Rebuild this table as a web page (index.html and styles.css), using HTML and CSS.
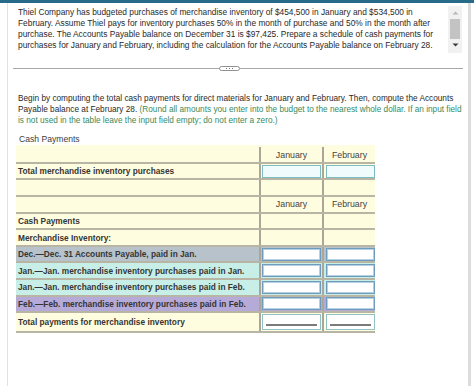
FILE: index.html
```html
<!DOCTYPE html>
<html>
<head>
<meta charset="utf-8">
<link rel="stylesheet" href="styles.css">
</head>
<body>
<div class="topbar"></div>
<div class="main">
  <div class="question">
    <p class="qtext">Thiel Company has budgeted purchases of merchandise inventory of $454,500 in January and $534,500 in<br>February. Assume Thiel pays for inventory purchases 50% in the month of purchase and 50% in the month after<br>purchase. The Accounts Payable balance on December 31 is $97,425. Prepare a schedule of cash payments for<br>purchases for January and February, including the calculation for the Accounts Payable balance on February 28.</p>
    <div class="scrollbar">
      <svg class="arrow" width="7" height="4" viewBox="0 0 7 4"><path d="M0.5 3.5 L3.5 0.5 L6.5 3.5 Z" fill="#b8b8b8"/></svg>
      <div class="thumb"></div>
      <svg class="arrow" width="7" height="4" viewBox="0 0 7 4"><path d="M0.5 0.5 L3.5 3.5 L6.5 0.5 Z" fill="#3a3a3a"/></svg>
    </div>
  </div>
  <div class="divider">
    <span class="rule"></span>
    <span class="pill"><i></i><i></i><i></i></span>
    <span class="rule"></span>
  </div>
  <p class="instr">Begin by computing the total cash payments for direct materials for January and February. Then, compute the Accounts<br>Payable balance at February 28. <span class="hint">(Round all amounts you enter into the budget to the nearest whole dollar. If an input field<br>is not used in the table leave the input field empty; do not enter a zero.)</span></p>
  <div class="caption">Cash Payments</div>
  <div class="sheet">
    <div class="row head first"><div class="c lbl"></div><div class="c num">January</div><div class="c num">February</div></div>
    <div class="row"><div class="c lbl">Total merchandise inventory purchases</div><div class="c num"><input class="fld given jan"></div><div class="c num"><input class="fld given feb"></div></div>
    <div class="row"><div class="c lbl"></div><div class="c num"></div><div class="c num"></div></div>
    <div class="row head"><div class="c lbl"></div><div class="c num">January</div><div class="c num">February</div></div>
    <div class="row"><div class="c lbl">Cash Payments</div><div class="c num"></div><div class="c num"></div></div>
    <div class="row"><div class="c lbl">Merchandise Inventory:</div><div class="c num"></div><div class="c num"></div></div>
    <div class="row dec"><div class="c lbl">Dec.—Dec. 31 Accounts Payable, paid in Jan.</div><div class="c num"><input class="fld jan"></div><div class="c num"><input class="fld feb"></div></div>
    <div class="row jn"><div class="c lbl">Jan.—Jan. merchandise inventory purchases paid in Jan.</div><div class="c num"><input class="fld jan"></div><div class="c num"><input class="fld feb"></div></div>
    <div class="row jn"><div class="c lbl">Jan.—Jan. merchandise inventory purchases paid in Feb.</div><div class="c num"><input class="fld jan"></div><div class="c num"><input class="fld feb"></div></div>
    <div class="row fb"><div class="c lbl">Feb.—Feb. merchandise inventory purchases paid in Feb.</div><div class="c num"><input class="fld jan"></div><div class="c num"><input class="fld feb"></div></div>
    <div class="row total"><div class="c lbl">Total payments for merchandise inventory</div><div class="c num"><input class="fld tot jan"></div><div class="c num"><input class="fld tot feb"></div></div>
  </div>
</div>
</body>
</html>
```
FILE: styles.css
```css
html, body {
  margin: 0;
  padding: 0;
  background: #fff;
}
body {
  width: 474px;
  height: 386px;
  overflow: hidden;
  font-family: "Liberation Sans", Arial, sans-serif;
  color: #2a2a2a;
}
.topbar {
  height: 3px;
  background: #276b88;
}
.main {
  box-sizing: border-box;
  margin-left: 7px;
  width: 464px;
  height: 383px;
  border-left: 1px solid #e2e2e2;
  border-right: 3px solid #dcdcdc;
}
.question {
  display: flex;
  align-items: flex-start;
  padding-top: 3px;
}
.qtext {
  margin: 0;
  padding: 0.5px 0 0 10px;
  font-size: 8.35px;
  line-height: 11.3px;
  white-space: nowrap;
}
.scrollbar {
  margin-left: auto;
  margin-right: 6px;
  width: 14px;
  height: 47px;
  background: #f1f1f1;
  display: flex;
  flex-direction: column;
  align-items: center;
  padding-top: 5px;
  box-sizing: border-box;
}
.scrollbar .arrow { display: block; }
.thumb {
  width: 10px;
  height: 20px;
  background: #c3c3c3;
  margin: 4px 0 4px;
}
.divider {
  display: flex;
  align-items: center;
  margin: 12.5px 5px 0 5px;
  height: 5px;
}
.rule {
  height: 1px;
  background: #a8a8a8;
}
.rule:first-child { width: 206px; }
.rule:last-child { flex: 1; }
.pill {
  box-sizing: border-box;
  width: 21px;
  height: 5px;
  border: 1px solid #8f8f8f;
  border-radius: 3px;
  background: #fff;
  display: flex;
  justify-content: center;
  align-items: center;
  gap: 2px;
}
.pill i {
  width: 1px;
  height: 1px;
  background: #777;
}
.instr {
  margin: 22.5px 0 0 0;
  padding-left: 10px;
  font-size: 8.25px;
  line-height: 11px;
  white-space: nowrap;
}
.hint { color: #3b8a5b; }
.caption {
  margin: 8px 0 0 11px;
  font-size: 8.6px;
  line-height: 11px;
  color: #3c3c3c;
}
.sheet {
  margin: 0.3px 0 0 8px;
  width: 359px;
}
.row {
  display: grid;
  grid-template-columns: 243px 63px 53px;
  box-sizing: border-box;
  height: 16.6px;
  background: #fffddf;
  border-top: 2px solid #b9b5a4;
}
.row.first { border-top-color: #fffddf; }
.c {
  display: flex;
  align-items: center;
  font-size: 8.3px;
  color: #353535;
  white-space: nowrap;
  overflow: hidden;
}
.lbl {
  padding-left: 2px;
  font-weight: bold;
}
.num {
  border-left: 2px solid #aba698;
}
.head .num {
  justify-content: center;
  font-size: 8.8px;
  font-weight: normal;
  color: #444;
}
.row.dec { background: #b7c2ca; }
.row.jn { background: #c7efe7; }
.row.fb { background: #b6aad9; }
.row.total {
  height: 21.5px;
  border-bottom: 2px solid #b9b5a4;
}
.fld {
  box-sizing: border-box;
  height: 13px;
  padding: 0;
  margin: 0;
  border: 1px solid #6f9cbc;
  box-shadow: inset 0 0 0 1px #b4d0e2;
  background: #fff;
  outline: none;
}
.fld.jan { width: 59px; margin-left: 1px; }
.fld.feb { width: 49px; margin-left: 2px; }
.fld.given {
  border-color: #7fbcc2;
  box-shadow: none;
  background: #effbfc;
}
.fld.tot {
  height: 16px;
  border-color: #8fc1c6;
  box-shadow: none;
  background: #fff linear-gradient(#7b7b7b, #7b7b7b) no-repeat;
  background-size: calc(100% - 6px) 2px;
  background-position: 3px calc(100% - 3px);
}
```
